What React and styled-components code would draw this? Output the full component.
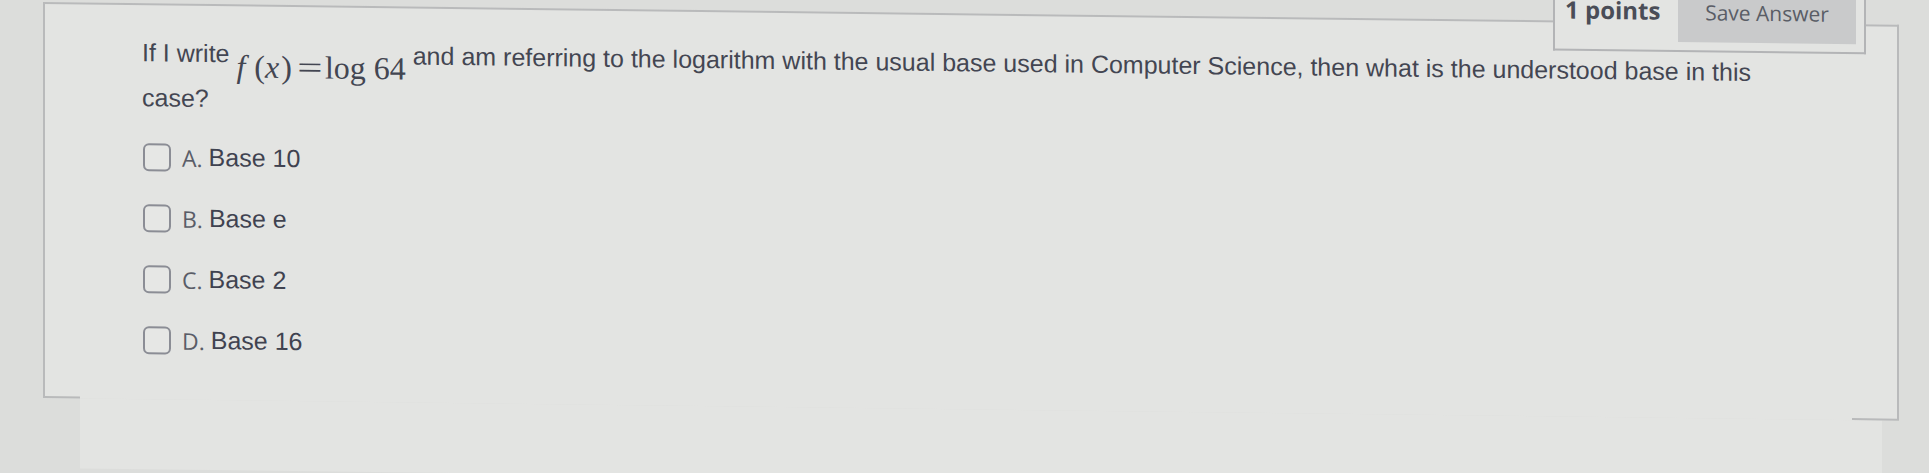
import React from "react";
import styled, { createGlobalStyle } from "styled-components";

const GlobalStyle = createGlobalStyle`
  html, body {
    margin: 0;
    padding: 0;
    background: #dcdddb;
  }
  body {
    width: 1929px;
    height: 473px;
    overflow: hidden;
  }
`;

const options = [
  { letter: "A.", text: "Base 10" },
  { letter: "B.", text: "Base e" },
  { letter: "C.", text: "Base 2" },
  { letter: "D.", text: "Base 16" },
];

const App = () => {
  return (
    <>
      <GlobalStyle />
      <Page>
        <Panel>
          <PointsBox>
            <Points>1 points</Points>
            <SaveButton type="button">Save Answer</SaveButton>
          </PointsBox>
          <Body>
            <Question>
              If I write{" "}
              <MathExpr>
                <Var $gap={9}>f</Var>
                <Glyph>(</Glyph>
                <Var $gap={2}>x</Var>
                <Glyph>)</Glyph>
                <Equals>=</Equals>
                <Glyph $gap={8}>log</Glyph>
                <Glyph>64</Glyph>
              </MathExpr>{" "}
              and am referring to the logarithm with the usual base used in
              Computer Science, then what is the understood base in this case?
            </Question>
            <OptionList>
              {options.map((o) => (
                <OptionRow key={o.letter}>
                  <Checkbox />
                  <Letter>{o.letter}</Letter>
                  <OptionText>{o.text}</OptionText>
                </OptionRow>
              ))}
            </OptionList>
          </Body>
          <Footer>
            <Corner $w={35} />
            <Corner $w={45} />
          </Footer>
        </Panel>
        <NextPanel />
      </Page>
    </>
  );
};

export default App;

/* the photo was taken at a slight angle, so the sheet slopes down to the right */
const Page = styled.div`
  padding: 2px 0 0 43px;
  transform: skewY(0.7deg);
  transform-origin: 43px 2px;
`;

const Panel = styled.section`
  position: relative;
  width: 1852px;
  background: #e3e4e2;
  border: 2px solid #b9babb;
  border-bottom: none;
`;

const PointsBox = styled.div`
  position: absolute;
  top: -52px;
  right: 31px;
  width: 309px;
  height: 78px;
  display: flex;
  align-items: flex-start;
  background: #e3e4e2;
  border: 2px solid #b3b4b6;
  border-top: none;
`;

const Points = styled.div`
  margin: 27px 0 0 10px;
  font-family: "Open Sans", sans-serif;
  font-weight: 700;
  font-size: 24px;
  line-height: 1;
  color: #4a4d57;
`;

const SaveButton = styled.button`
  margin: 0 8px 0 auto;
  width: 178px;
  height: 70px;
  padding: 30px 0 0;
  display: flex;
  justify-content: center;
  align-items: flex-start;
  border: none;
  background: #c9cacb;
  font-family: "Open Sans", sans-serif;
  font-size: 21px;
  line-height: 1;
  color: #5a5d66;
`;

const Body = styled.div`
  padding: 25px 105px 27px 97px;
`;

const Question = styled.p`
  margin: 0;
  font-family: "Liberation Sans", Arial, sans-serif;
  font-size: 25px;
  line-height: 45px;
  color: #434652;
`;

const MathExpr = styled.span`
  display: inline-block;
  vertical-align: -15px;
  line-height: 0;
  font-family: "Liberation Serif", "Times New Roman", serif;
  font-size: 32px;
  color: #434652;
`;

const Var = styled.span`
  font-style: italic;
  margin-right: ${(p) => p.$gap || 0}px;
`;

const Glyph = styled.span`
  margin-right: ${(p) => p.$gap || 0}px;
`;

const Equals = styled.span`
  display: inline-block;
  width: 30px;
  margin-left: 3px;
  text-align: center;
  transform: scaleX(1.4);
`;

const OptionList = styled.ul`
  list-style: none;
  margin: 6px 0 0;
  padding: 0 0 0 1px;
`;

const OptionRow = styled.li`
  height: 61px;
  display: flex;
  align-items: center;
`;

const Checkbox = styled.span`
  box-sizing: border-box;
  width: 28px;
  height: 28px;
  margin-right: 11px;
  border: 2px solid #8b8d95;
  border-radius: 6px;
  background: #e6e7e5;
`;

const Letter = styled.span`
  margin-right: 6px;
  font-family: "Open Sans", sans-serif;
  font-size: 23px;
  color: #5a5d68;
`;

const OptionText = styled.span`
  font-family: "Liberation Sans", Arial, sans-serif;
  font-size: 25px;
  color: #3f4250;
`;

const Footer = styled.div`
  display: flex;
  justify-content: space-between;
`;

const Corner = styled.div`
  width: ${(p) => p.$w}px;
  border-bottom: 2px solid #b9babb;
`;

const NextPanel = styled.div`
  margin: 0 47px 0 37px;
  height: 70px;
  background: #e3e4e2;
`;
